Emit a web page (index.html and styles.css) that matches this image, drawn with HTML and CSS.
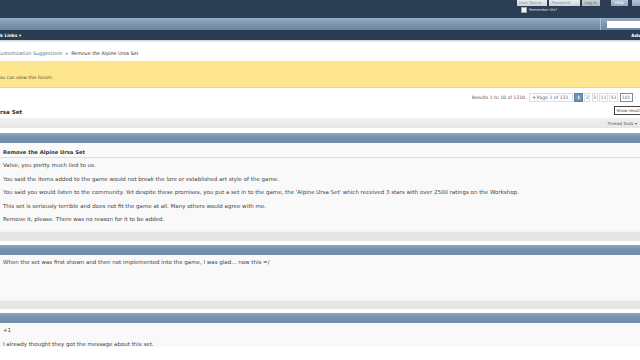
FILE: index.html
```html
<!DOCTYPE html>
<html>
<head>
    <title>Remove the Alpine Ursa Set</title>
    <link rel="stylesheet" href="styles.css">
</head>
<body>
    <div class="header">
        <div class="login">
            <div class="login-row">
                <span class="field">User Name</span>
                <span class="field">Password</span>
                <span class="login-btn">Log in</span>
                <span class="hdr-btn">Help</span>
                <span class="hdr-btn hdr-btn-cut"></span>
            </div>
            <div class="remember"><span class="check"></span>Remember Me?</div>
        </div>
    </div>
    <div class="subbar">
        <div class="subbar-fill"></div>
        <div class="search"></div>
    </div>
    <div class="navbar">
        <span class="quick">Quick Links &#9662;</span>
        <span class="adv">Advanced Search</span>
    </div>
    <div class="navline"></div>

    <div class="crumbs">
        <span class="crumb-link">Customization Suggestions</span>
        <span class="crumb-sep">&raquo;</span>
        <span>Remove the Alpine Ursa Set</span>
    </div>

    <div class="notice">
        <span class="notice-text">You can view this forum.</span>
    </div>

    <div class="threadhead">
        <h1 class="thread-title">Remove the Alpine Ursa Set</h1>
        <div class="paging">
            <div class="paging-row">
                <span class="results">Results 1 to 10 of 1310</span>
                <span class="pagebox">&#9662; Page 1 of 131</span>
                <span class="pg pg-on">1</span>
                <span class="pg">2</span>
                <span class="pg">3</span>
                <span class="pg">11</span>
                <span class="pg">51</span>
                <span class="pg pg-dark">101</span>
                <span class="pg-dash">&ndash;</span>
            </div>
            <div class="tooltip">Show results</div>
        </div>
    </div>

    <div class="tools">
        <span>Thread Tools &#9662;</span>
    </div>

    <div class="post post-first">
        <div class="postbar"></div>
        <div class="post-title">Remove the Alpine Ursa Set</div>
        <div class="post-body body-first">
            <p>Valve, you pretty much lied to us.</p>
            <p>You said the items added to the game would not break the lore or established art style of the game.</p>
            <p>You said you would listen to the community. Yet despite these promises, you put a set in to the game, the 'Alpine Ursa Set' which received 3 stars with over 2500 ratings on the Workshop.</p>
            <p>This set is seriously terrible and does not fit the game at all. Many others would agree with me.</p>
            <p>Remove it, please. There was no reason for it to be added.</p>
        </div>
        <div class="post-foot"></div>
    </div>

    <div class="post">
        <div class="postbar"></div>
        <div class="post-body body-second">
            <p>When the set was first shown and then not implemented into the game, I was glad... now this =/</p>
        </div>
        <div class="post-foot foot-short"></div>
    </div>

    <div class="post">
        <div class="postbar"></div>
        <div class="post-body">
            <p>+1</p>
            <p>I already thought they got the message about this set.</p>
        </div>
    </div>
</body>
</html>
```

FILE: styles.css
```css
html, body {
    margin: 0;
    padding: 0;
    width: 640px;
    height: 360px;
    overflow: hidden;
    background-color: #fff;
    font-family: "DejaVu Sans", Verdana, sans-serif;
    font-size: 5.5px;
    color: #444;
}

/* top header */
.header {
    height: 18px;
    background-color: #2b3e53;
    display: flex;
    justify-content: flex-end;
}
.login {
    width: 123px;
}
.login-row {
    display: flex;
    gap: 2px;
    height: 6px;
}
.field {
    width: 29px;
    background: linear-gradient(#e8edf2, #c9d3dd);
    color: #8a97a4;
    font-size: 4px;
    line-height: 5px;
    padding-left: 2px;
    overflow: hidden;
}
.login-btn {
    width: 18px;
    background: linear-gradient(#c9d3dd, #a9b6c4);
    color: #7a5b4c;
    font-size: 4px;
    line-height: 5px;
    text-align: center;
    margin-right: 9px;
}
.hdr-btn {
    width: 18px;
    background: linear-gradient(#b9c7d6, #92a6ba);
    color: #fff;
    font-size: 4px;
    line-height: 5px;
    text-align: center;
}
.hdr-btn-cut {
    width: 8px;
    margin-left: 2px;
}
.remember {
    display: flex;
    align-items: center;
    gap: 2px;
    margin-top: 1px;
    padding-left: 4px;
    color: #d6dee6;
    font-size: 3.6px;
    height: 6px;
}
.check {
    width: 4px;
    height: 4px;
    background-color: #f2f2f2;
    border: 0.5px solid #9aa;
}

/* light strip with search */
.subbar {
    height: 12px;
    display: flex;
    background: linear-gradient(#97adc2, #7893ac 60%, #6c88a2);
}
.subbar-fill {
    flex: 1;
    border-right: 1px solid #a8bccd;
}
.search {
    width: 33px;
    height: 7px;
    margin: 3px 0 0 6px;
    background-color: #fff;
}

/* dark nav */
.navbar {
    height: 10px;
    background-color: #2a3c51;
    display: flex;
    justify-content: space-between;
    align-items: center;
    color: #fff;
    font-weight: bold;
    font-size: 4.4px;
}
.quick {
    margin-left: -11px;
}
.adv {
    margin-right: -34px;
}
.navline {
    height: 2px;
    background: linear-gradient(#c6d1dc, #eef2f5);
}

/* breadcrumb */
.crumbs {
    height: 19px;
    box-sizing: border-box;
    padding-top: 3px;
    display: flex;
    align-items: center;
    gap: 3px;
    margin-left: -3px;
    font-size: 4.8px;
    color: #333;
}
.crumb-link {
    color: #4a7390;
}
.crumb-sep {
    color: #555;
}

/* yellow notice */
.notice {
    height: 27px;
    box-sizing: border-box;
    background-color: #fde68e;
    border-bottom: 1px solid #eed77c;
    display: flex;
    align-items: center;
    padding-top: 7px;
    font-size: 4.6px;
}
.notice-text {
    margin-left: -3px;
    color: #4b4b3a;
}

/* thread heading + paging */
.threadhead {
    height: 30px;
    display: flex;
    justify-content: space-between;
}
.thread-title {
    margin: 21px 0 0 -66px;
    font-size: 5.6px;
    color: #333;
    font-weight: bold;
    white-space: nowrap;
}
.paging {
    margin-top: 5px;
    width: 170px;
    display: flex;
    flex-direction: column;
    align-items: flex-end;
}
.paging-row {
    display: flex;
    align-items: center;
    gap: 1.5px;
    height: 9px;
    white-space: nowrap;
    font-size: 4.6px;
    color: #555;
}
.results {
    margin-right: 2px;
}
.pagebox {
    border: 0.5px solid #d8e0e8;
    background-color: #fafbfc;
    padding: 1px 3.5px;
    color: #4a6e8f;
}
.pg {
    border: 0.5px solid #d8e0e8;
    padding: 1px 0.5px;
    color: #4a6e8f;
}
.pg-on {
    background-color: #7090b4;
    border-color: #5b7da3;
    color: #fff;
    font-weight: bold;
    padding: 1px 1.5px;
}
.pg-dark {
    border-color: #7d8b99;
    padding: 1px 1px;
}
.pg-dash {
    color: #999;
    width: 6px;
    overflow: hidden;
}
.tooltip {
    margin-top: 4px;
    margin-right: -5px;
    border: 0.5px solid #444;
    background-color: #fff;
    padding: 1px 2px;
    font-size: 4px;
    color: #444;
}

/* tools strip */
.tools {
    height: 10px;
    background: linear-gradient(#f0f0f0, #e6e6e6);
    display: flex;
    justify-content: flex-end;
    align-items: center;
    padding-right: 3px;
    font-size: 4.2px;
    color: #555;
}

/* posts */
.post-first {
    padding-top: 5px;
}
.postbar {
    height: 10px;
    background: linear-gradient(#8ea7be, #7592ae 40%, #6f8dab);
}
.post-title {
    height: 15px;
    box-sizing: border-box;
    padding: 4px 0 0 3px;
    background-color: #fafafa;
    border-bottom: 1px solid #dedede;
    display: flex;
    align-items: center;
    font-weight: bold;
    font-size: 5.2px;
    color: #333;
}
.post-body {
    background-color: #f9f9f9;
    padding: 4px 3px 0;
}
.body-first {
    height: 68px;
}
.body-second {
    height: 41px;
}
.post-body p {
    margin: 0 0 6.8px;
    line-height: 6.8px;
    white-space: nowrap;
}
.post-foot {
    height: 9px;
    background-color: #e6e6e6;
    border-top: 2px solid #f3f3f3;
    border-bottom: 4px solid #fff;
}
.foot-short {
    height: 8px;
    border-top-width: 1px;
}
```
